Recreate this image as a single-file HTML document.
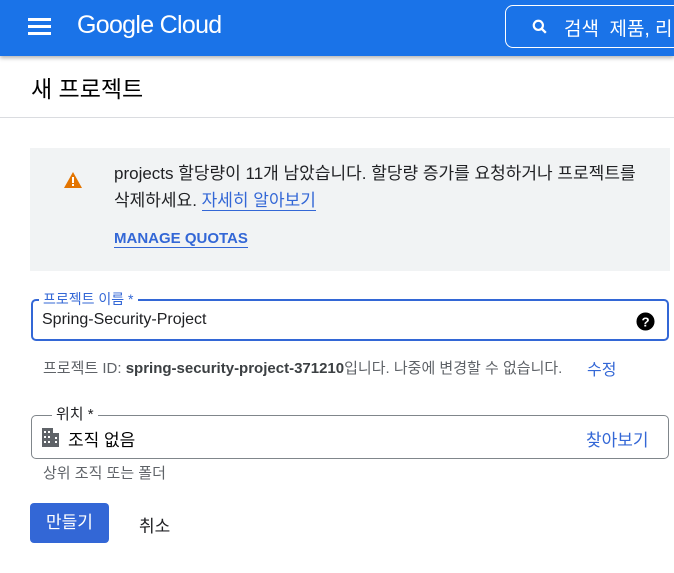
<!DOCTYPE html>
<html><head><meta charset="utf-8"><style>
*{margin:0;padding:0;box-sizing:border-box}
body{width:674px;height:573px;overflow:hidden;background:#fff;font-family:"Liberation Sans","Noto Sans CJK KR",sans-serif;position:relative;color:#202124}
.bar{position:absolute;left:0;top:0;width:674px;height:56px;background:#1a73e8;box-shadow:0 2px 4px rgba(0,0,0,.3)}
.abs{position:absolute;white-space:nowrap}
.ham span{position:absolute;left:28px;width:23px;height:3px;background:#fff}
.search{position:absolute;left:505px;top:5px;width:190px;height:43px;border:1px solid #fff;border-radius:8px}
.hdr{position:absolute;left:0;top:117px;width:674px;height:1px;background:#dadce0}
.alert{position:absolute;left:30px;top:148px;width:640px;height:123px;background:#f1f3f4}
.f1{position:absolute;left:31px;top:299px;width:638px;height:42px;border:2px solid #3367d6;border-radius:5px}
.f2{position:absolute;left:31px;top:415px;width:638px;height:44px;border:1px solid #80868b;border-radius:5px}
.btn{position:absolute;left:30px;top:503px;width:79px;height:40px;background:#3367d6;border-radius:4px;color:#fff;font-size:17px;text-align:center;line-height:40px}
</style></head><body>
<div class="bar">
<div class="ham"><span style="top:18px"></span><span style="top:25px"></span><span style="top:32px"></span></div>
<div class="abs" style="left:77px;top:11px;color:#fff;font-size:25px;letter-spacing:-0.7px">Google Cloud</div>
<div class="search">
<svg class="abs" style="left:24px;top:11px" width="20" height="20" viewBox="0 0 24 24"><circle cx="10" cy="10" r="5.5" fill="none" stroke="#fff" stroke-width="2.6"/><path d="M14 14l5 5" stroke="#fff" stroke-width="2.8"/></svg>
<div class="abs" style="left:58px;top:8px;color:#fff;font-size:19px">검색&nbsp; 제품, 리</div>
</div>
</div>
<div class="abs" style="left:31px;top:70px;font-size:23px;color:#000">새 프로젝트</div>
<div class="hdr"></div>
<div class="alert">
<svg class="abs" style="left:33px;top:23px" width="20" height="18" viewBox="0 0 20 18"><path d="M10 1L19 17H1Z" fill="#e37400"/><rect x="9" y="6" width="2" height="6" fill="#fff"/><rect x="9" y="13" width="2" height="2" fill="#fff"/></svg>
<div class="abs" style="left:84px;top:12px;font-size:17px;line-height:27px">projects 할당량이 11개 남았습니다. 할당량 증가를 요청하거나 프로젝트를<br>삭제하세요. <span style="color:#3367d6;border-bottom:1px solid #3367d6">자세히 알아보기</span></div>
<div class="abs" style="left:84px;top:82px;font-size:15px;font-weight:bold;color:#3367d6;border-bottom:1px solid #3367d6">MANAGE QUOTAS</div>
</div>
<div class="f1">
<div class="abs" style="left:6px;top:-12px;background:#fff;padding:0 4px;font-size:14px;color:#3367d6">프로젝트 이름 *</div>
<div class="abs" style="left:9px;top:10px;font-size:16px;color:#202124">Spring-Security-Project</div>
<svg class="abs" style="left:603px;top:11px" width="19" height="19" viewBox="0 0 20 20"><circle cx="10" cy="10" r="9.5" fill="#000"/><text x="10" y="15" font-size="14" font-weight="bold" fill="#fff" text-anchor="middle" font-family="Liberation Sans">?</text></svg>
</div>
<div class="abs" style="left:43px;top:357px;font-size:15px;color:#5f6368">프로젝트 ID: <b style="color:#3c4043">spring-security-project-371210</b>입니다. 나중에 변경할 수 없습니다.</div>
<div class="abs" style="left:587px;top:356px;font-size:16px;color:#3367d6">수정</div>
<div class="f2">
<div class="abs" style="left:20px;top:-13px;background:#fff;padding:0 4px;font-size:15px;color:#202124">위치 *</div>
<svg class="abs" style="left:10px;top:12px" width="17" height="19" viewBox="0 0 17 19"><rect x="0" y="0" width="11" height="19" fill="#5f6368"/><rect x="11" y="5" width="6" height="14" fill="#5f6368"/><g fill="#fff"><rect x="2" y="3" width="2" height="2"/><rect x="6" y="3" width="2" height="2"/><rect x="2" y="8" width="2" height="2"/><rect x="6" y="8" width="2" height="2"/><rect x="2" y="13" width="2" height="2"/><rect x="6" y="13" width="2" height="2"/><rect x="13" y="9" width="2" height="2"/><rect x="13" y="13" width="2" height="2"/></g></svg>
<div class="abs" style="left:36px;top:10px;font-size:17px;color:#000">조직 없음</div>
<div class="abs" style="left:554px;top:10px;font-size:17px;color:#3367d6">찾아보기</div>
</div>
<div class="abs" style="left:43px;top:462px;font-size:15px;color:#5f6368">상위 조직 또는 폴더</div>
<div class="btn">만들기</div>
<div class="abs" style="left:139px;top:512px;font-size:17px;color:#202124">취소</div>
</body></html>
